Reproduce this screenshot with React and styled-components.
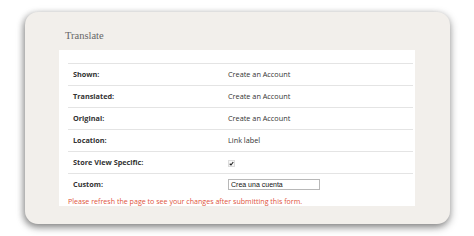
import React from "react";
import styled, { createGlobalStyle } from "styled-components";

const rows = [
  { label: "Shown:", value: "Create an Account" },
  { label: "Translated:", value: "Create an Account" },
  { label: "Original:", value: "Create an Account" },
  { label: "Location:", value: "Link label" },
  { label: "Store View Specific:", type: "check" },
  { label: "Custom:", type: "input", value: "Crea una cuenta" },
];

export default function App() {
  return (
    <>
      <Global />
      <Page>
        <Window>
          <Title>Translate</Title>
          <Panel>
            <Table>
              <thead>
                <HeadRow>
                  <th />
                  <th />
                </HeadRow>
              </thead>
              <tbody>
                {rows.map((r) => (
                  <Row key={r.label}>
                    <Label>{r.label}</Label>
                    <Value>
                      {r.type === "check" ? (
                        <Check>
                          <svg width="5" height="5" viewBox="0 0 10 10">
                            <path d="M1.5 5.5 L4 8 L8.5 2" fill="none" stroke="#222" strokeWidth="2.2" />
                          </svg>
                        </Check>
                      ) : r.type === "input" ? (
                        <Input defaultValue={r.value} />
                      ) : (
                        r.value
                      )}
                    </Value>
                  </Row>
                ))}
              </tbody>
            </Table>
            <Notice>Please refresh the page to see your changes after submitting this form.</Notice>
          </Panel>
        </Window>
      </Page>
    </>
  );
}

const Global = createGlobalStyle`
  html, body {
    margin: 0;
    padding: 0;
    background: #fff;
  }
`;

const Page = styled.div`
  width: 474px;
  height: 236px;
  padding: 12px 0 0 25px;
  box-sizing: border-box;
  overflow: hidden;
`;

const Window = styled.div`
  width: 425px;
  height: 212px;
  box-sizing: border-box;
  padding: 18px 35px 18px 34px;
  background: #f2efeb;
  border-radius: 13px;
  box-shadow: 0 3px 8px rgba(0, 0, 0, 0.4), -2px 2px 6px rgba(0, 0, 0, 0.2);
  display: flex;
  flex-direction: column;
`;

const Title = styled.div`
  font-family: "Liberation Serif", serif;
  font-size: 10.5px;
  line-height: 12px;
  color: #666;
  padding-left: 6px;
  height: 20px;
`;

const Panel = styled.div`
  background: #fff;
  flex: 1;
  padding: 0 2px 0 9px;
  display: flex;
  flex-direction: column;
`;

const Table = styled.table`
  width: 100%;
  border-collapse: collapse;
  font-family: "Open Sans", sans-serif;
  font-size: 7.3px;
  color: #333;
`;

const HeadRow = styled.tr`
  height: 13px;
`;

const Row = styled.tr`
  height: 22px;
  border-top: 1px solid #e4e4e4;
`;

const Label = styled.td`
  font-weight: 700;
  padding: 0 0 0 5px;
  width: 155px;
`;

const Value = styled.td`
  padding: 0;
  vertical-align: middle;
`;

const Check = styled.span`
  display: inline-flex;
  align-items: center;
  justify-content: center;
  width: 5px;
  height: 5px;
  border: 0.5px solid #ddd;
  background: #f7f7f7;
  vertical-align: middle;
`;

const Input = styled.input`
  width: 92px;
  height: 11px;
  box-sizing: border-box;
  border: 1px solid #b8b8b8;
  padding: 0 2px;
  font-family: "Liberation Sans", sans-serif;
  font-size: 7px;
  color: #111;
  outline: none;
  display: block;
`;

const Notice = styled.div`
  font-family: "Open Sans", sans-serif;
  font-size: 7.1px;
  color: #e0533b;
  margin-top: 1px;
`;
